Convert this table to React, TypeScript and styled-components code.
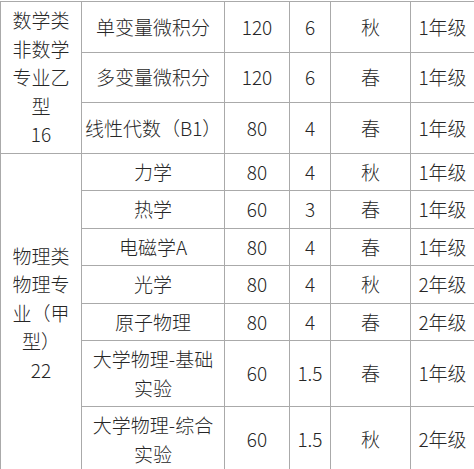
import React from "react";
import styled, { createGlobalStyle } from "styled-components";

const Global = createGlobalStyle`
  html, body { margin: 0; padding: 0; background: #ffffff; }
  body { font-family: "Noto Sans CJK SC", "Noto Sans", sans-serif; color: #262626; }
`;

const Table = styled.table`
  width: 474px;
  margin-top: 1px;
  border-collapse: collapse;
  table-layout: fixed;
  font-size: 19px;
  font-weight: 300;
  line-height: 28.5px;
  color: #262626;
`;

const Cell = styled.td`
  border: 1px solid #aaaaaa;
  padding: 4px 3px;
  text-align: center;
  vertical-align: middle;
  white-space: nowrap;
`;

type Course = { name: React.ReactNode; hours: string; credit: string; term: string; grade: string };

const groups: { label: React.ReactNode; courses: Course[] }[] = [
  {
    label: (
      <>
        数学类<br />非数学<br />专业乙<br />型<br />16
      </>
    ),
    courses: [
      { name: "单变量微积分", hours: "120", credit: "6", term: "秋", grade: "1年级" },
      { name: "多变量微积分", hours: "120", credit: "6", term: "春", grade: "1年级" },
      { name: "线性代数（B1）", hours: "80", credit: "4", term: "春", grade: "1年级" },
    ],
  },
  {
    label: (
      <>
        物理类<br />物理专<br />业（甲<br />型）<br />22
      </>
    ),
    courses: [
      { name: "力学", hours: "80", credit: "4", term: "秋", grade: "1年级" },
      { name: "热学", hours: "60", credit: "3", term: "春", grade: "1年级" },
      { name: "电磁学A", hours: "80", credit: "4", term: "春", grade: "1年级" },
      { name: "光学", hours: "80", credit: "4", term: "秋", grade: "2年级" },
      { name: "原子物理", hours: "80", credit: "4", term: "春", grade: "2年级" },
      {
        name: (
          <>
            大学物理-基础<br />实验
          </>
        ),
        hours: "60",
        credit: "1.5",
        term: "春",
        grade: "1年级",
      },
      {
        name: (
          <>
            大学物理-综合<br />实验
          </>
        ),
        hours: "60",
        credit: "1.5",
        term: "秋",
        grade: "2年级",
      },
    ],
  },
];

const widths = [81, 143, 65, 41, 80, 64];

export default function App() {
  return (
    <>
      <Global />
      <Table>
        <colgroup>
          {widths.map((w, i) => (
            <col key={i} style={{ width: w }} />
          ))}
        </colgroup>
        <tbody>
          {groups.map((g, gi) =>
            g.courses.map((c, ci) => (
              <tr key={`${gi}-${ci}`}>
                {ci === 0 && <Cell rowSpan={g.courses.length}>{g.label}</Cell>}
                <Cell>{c.name}</Cell>
                <Cell>{c.hours}</Cell>
                <Cell>{c.credit}</Cell>
                <Cell>{c.term}</Cell>
                <Cell>{c.grade}</Cell>
              </tr>
            ))
          )}
        </tbody>
      </Table>
    </>
  );
}
